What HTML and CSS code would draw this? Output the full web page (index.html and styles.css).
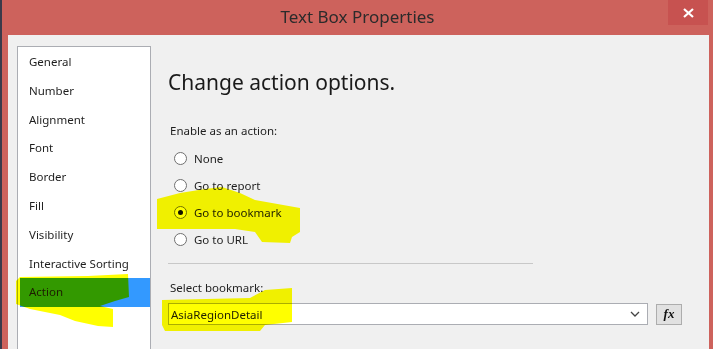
FILE: index.html
```html
<!DOCTYPE html>
<html lang="en">
<head>
    <meta charset="UTF-8">
    <title>Text Box Properties</title>
    <link rel="stylesheet" href="styles.css">
</head>
<body>

    <div class="window">
        <div class="titlebar">
            <span class="title">Text Box Properties</span>
            <button class="close">
                <svg width="11" height="10" viewBox="0 0 11 10"><path d="M1 1 L10 9 M10 1 L1 9" stroke="white" stroke-width="2.2"/></svg>
            </button>
        </div>

        <div class="client">
            <ul class="nav">
                <li>General</li>
                <li>Number</li>
                <li>Alignment</li>
                <li>Font</li>
                <li>Border</li>
                <li>Fill</li>
                <li>Visibility</li>
                <li>Interactive Sorting</li>
                <li class="selected">Action</li>
            </ul>

            <div class="content">
                <h1>Change action options.</h1>

                <div class="label">Enable as an action:</div>
                <div class="radios">
                    <label class="radio"><span class="dot"></span>None</label>
                    <label class="radio"><span class="dot"></span>Go to report</label>
                    <label class="radio checked"><span class="dot"></span>Go to bookmark</label>
                    <label class="radio"><span class="dot"></span>Go to URL</label>
                </div>

                <hr class="sep">

                <div class="label">Select bookmark:</div>
                <div class="combo-row">
                    <div class="combo">
                        <span>AsiaRegionDetail</span>
                        <svg width="10" height="6" viewBox="0 0 10 6"><path d="M1 1 L5 5 L9 1" fill="none" stroke="#444" stroke-width="1.3"/></svg>
                    </div>
                    <button class="fx">fx</button>
                </div>
            </div>
        </div>
    </div>

    <!-- highlighter marks drawn over the screenshot -->
    <svg class="marker" width="713" height="349" viewBox="0 0 713 349">
        <polygon points="16,281 20,277 88,276 128,274 129,297 115,301 100,306 113,309 113,327 98,326 75,321 60,315 40,311 30,309 16,304"/>
        <polygon points="157,199 180,193 205,189 222,187 240,193 255,200 300,208 300,232 292,237 290,243 262,242 255,232 235,229 157,229"/>
        <polygon points="162,300 250,298 265,290 292,288 292,322 265,325 260,331 165,331 162,325"/>
    </svg>

</body>
</html>
```

FILE: styles.css
```css
body {
    margin: 0;
    padding: 0;
    width: 713px;
    height: 349px;
    overflow: hidden;
    font-family: "Noto Sans", sans-serif;
    background-color: #cd625c;
}

.window {
    height: 349px;
    display: flex;
    flex-direction: column;
    border-left: 2px solid #3a3a4a;
}

.titlebar {
    height: 35px;
    flex-shrink: 0;
    display: flex;
    align-items: flex-start;
    justify-content: center;
    position: relative;
}

.title {
    margin-top: 5px;
    font-size: 17px;
    color: #2b2b2b;
}

.close {
    position: absolute;
    top: 0;
    right: 5px;
    width: 40px;
    height: 25px;
    border: none;
    background-color: #c75250;
    padding: 0;
    display: flex;
    align-items: center;
    justify-content: center;
}

.client {
    flex: 1;
    margin: 0 4px 0 6px;
    background-color: #f0f0f0;
    display: flex;
}

.nav {
    list-style: none;
    margin: 11px 0 0 9px;
    padding: 1px 0 0 0;
    width: 132px;
    background-color: white;
    border: 1px solid #abadb3;
    border-bottom: none;
    font-size: 11.5px;
    color: #1e1e1e;
}

.nav li {
    height: 28.8px;
    line-height: 28.8px;
    padding-left: 9px;
    margin-left: 2px;
}

.nav li.selected {
    background-color: #3399ff;
    color: #1e1e1e;
}

.content {
    flex: 1;
    padding: 31px 0 0 17px;
    font-size: 11.5px;
    color: #1e1e1e;
}

h1 {
    margin: 0;
    font-size: 21px;
    font-weight: normal;
    line-height: 32px;
    color: #1a1a1a;
}

.label {
    margin-left: 2px;
    line-height: 16px;
}

.content h1 + .label {
    margin-top: 25px;
}

.radios {
    margin-top: 6px;
    display: flex;
    flex-direction: column;
}

.radio {
    display: flex;
    align-items: center;
    height: 27px;
    margin-left: 6px;
}

.dot {
    width: 11px;
    height: 11px;
    border: 1px solid #707070;
    border-radius: 50%;
    background-color: white;
    margin-right: 7px;
    display: flex;
    align-items: center;
    justify-content: center;
}

.radio.checked .dot::after {
    content: "";
    width: 5px;
    height: 5px;
    border-radius: 50%;
    background-color: #111;
}

.sep {
    width: 365px;
    margin: 10px 0 16px 0;
    border: none;
    border-top: 1px solid #c8c8c8;
}

.combo-row {
    display: flex;
    align-items: center;
    margin-top: 7px;
}

.combo {
    width: 469px;
    height: 20px;
    border: 1px solid #abadb3;
    background-color: white;
    display: flex;
    align-items: center;
    justify-content: space-between;
    padding: 0 7px 0 2px;
    box-sizing: content-box;
}

.fx {
    margin-left: 8px;
    width: 26px;
    height: 21px;
    border: 1px solid #adadad;
    background-color: #e1e1e1;
    font-family: "Liberation Serif", serif;
    font-style: italic;
    font-weight: bold;
    font-size: 13px;
    padding: 0;
    color: #111;
}

.marker {
    position: absolute;
    top: 0;
    left: 0;
    pointer-events: none;
    mix-blend-mode: multiply;
}

.marker polygon {
    fill: #ffff00;
}
```
